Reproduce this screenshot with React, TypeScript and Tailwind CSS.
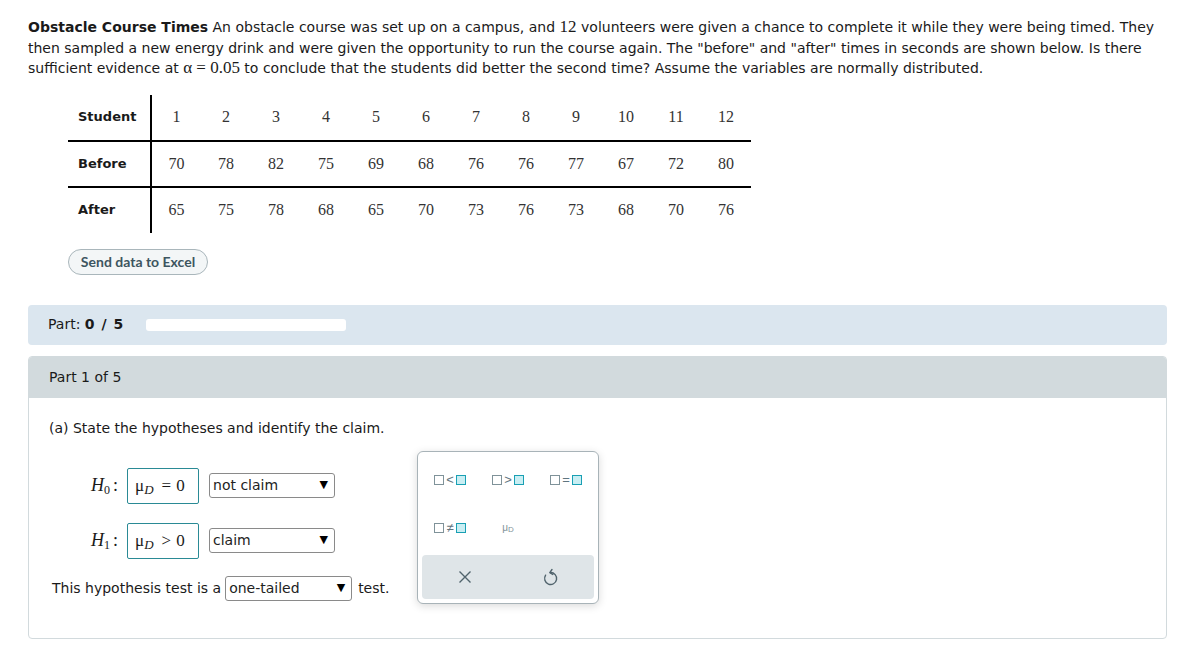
import React from 'react';

// Data for the paired samples
const STUDENTS = [1, 2, 3, 4, 5, 6, 7, 8, 9, 10, 11, 12];
const BEFORE = [70, 78, 82, 75, 69, 68, 76, 76, 77, 67, 72, 80];
const AFTER = [65, 75, 78, 68, 65, 70, 73, 76, 73, 68, 70, 76];

const SANS = "font-['DejaVu_Sans',Verdana,sans-serif]";
const SERIF = "font-['Liberation_Serif','Times_New_Roman',serif]";

const DataRow: React.FC<{ label: string; values: number[]; last?: boolean }> = ({ label, values, last }) => (
  <tr className={last ? 'h-[46px]' : 'h-[46px] border-b-2 border-black'}>
    <td className="w-[83px] pl-[10px] border-r-2 border-black text-[13px] font-bold">{label}</td>
    {values.map((v, i) => (
      <td key={i} className={`w-[50px] text-center text-[16px] text-[#333] ${SERIF}`}>
        {v}
      </td>
    ))}
  </tr>
);

const FakeSelect: React.FC<{ value: string; width: string }> = ({ value, width }) => (
  <div
    className={`${width} h-[25px] flex items-center justify-between pl-[3px] pr-[6px] border border-[#8a8a8a] rounded-[3px] bg-white text-[14px] text-[#222]`}
  >
    <span>{value}</span>
    <span className="text-[11px] text-black">▼</span>
  </div>
);

const MuD = () => (
  <span className={`${SERIF} text-[17px]`}>
    μ<sub className="italic text-[13px] relative top-[3px]">D</sub>
  </span>
);

const Hypothesis: React.FC<{ idx: string; op: string; tag: string }> = ({ idx, op, tag }) => (
  <div className="flex items-center h-[36px] pl-[42px]">
    <span className={`${SERIF} text-[18px] italic`}>H</span>
    <sub className={`${SERIF} text-[12px] relative top-[4px]`}>{idx}</sub>
    <span className={`${SERIF} text-[18px] ml-[3px]`}>:</span>
    <div className="ml-[9px] w-[72px] h-[36px] flex items-center pl-[7px] border border-[#2a8a95] rounded-[2px]">
      <MuD />
      <span className={`${SERIF} text-[17px] ml-[8px]`}>{op}</span>
      <span className={`${SERIF} text-[17px] ml-[5px]`}>0</span>
    </div>
    <div className="ml-[10px]">
      <FakeSelect value={tag} width="w-[126px]" />
    </div>
  </div>
);

// Small template glyph: empty box, operator, filled box
const Template: React.FC<{ op: string }> = ({ op }) => (
  <div className="flex items-center gap-[2px]">
    <span className="w-[10px] h-[10px] border-[1.5px] border-[#7f9299] bg-white" />
    <span className="text-[13px] leading-none text-[#5f7580] font-['Liberation_Sans',Arial,sans-serif]">{op}</span>
    <span className="w-[10px] h-[10px] border-[1.5px] border-[#19a0b4] bg-[#c9eef3]" />
  </div>
);

const Palette = () => (
  <div className="w-[182px] h-[153px] flex flex-col border border-[#a8b3b8] rounded-[6px] bg-white shadow-[0_2px_8px_rgba(0,0,0,0.15)]">
    <div className="grid grid-cols-3 px-[3px] pt-[21px]">
      <div className="flex justify-center h-[14px]"><Template op="<" /></div>
      <div className="flex justify-center h-[14px]"><Template op=">" /></div>
      <div className="flex justify-center h-[14px]"><Template op="=" /></div>
    </div>
    <div className="grid grid-cols-3 px-[3px] mt-[34px]">
      <div className="flex justify-center h-[14px]"><Template op="≠" /></div>
      <div className="flex justify-center items-center h-[14px] text-[10px] text-[#7f9299] font-['Liberation_Sans',Arial,sans-serif]">
        μ<span className="text-[8px] relative top-[2px]">D</span>
      </div>
      <div />
    </div>
    <div className="mt-auto mx-[4px] mb-[4px] h-[44px] flex bg-[#dfe5e8] rounded-[4px]">
      <div className="flex-1 flex items-center justify-center">
        <svg width="14" height="14" viewBox="0 0 14 14" fill="none" stroke="#50636c" strokeWidth="1.4">
          <path d="M1.5 1.5 L12.5 12.5 M12.5 1.5 L1.5 12.5" />
        </svg>
      </div>
      <div className="flex-1 flex items-center justify-center">
        <svg width="16" height="18" viewBox="0 0 16 18" fill="none" stroke="#50636c" strokeWidth="1.4" strokeLinecap="round" strokeLinejoin="round">
          <path d="M7.5 4.5 A6 6 0 1 1 2.6 7.2" />
          <path d="M9 1.5 L6.8 4.6 L9.8 6.5" />
        </svg>
      </div>
    </div>
  </div>
);

export default function App() {
  return (
    <div className={`min-h-screen bg-white text-[#1a1a1a] ${SANS} pl-[28px] pr-[15px] pt-[17px]`}>
      <p className="text-[14px] leading-[20.5px] pr-[6px]">
        <b>Obstacle Course Times</b> An obstacle course was set up on a campus, and{' '}
        <span className={`${SERIF} text-[17px]`}>12</span> volunteers were given a chance to complete it while they
        were being timed. They then sampled a new energy drink and were given the opportunity to run the course
        again. The "before" and "after" times in seconds are shown below. Is there sufficient evidence at{' '}
        <span className={`${SERIF} text-[17px]`}>α = 0.05</span> to conclude that the students did better the
        second time? Assume the variables are normally distributed.
      </p>

      <table className="ml-[40px] mt-[16px] border-collapse">
        <tbody>
          <tr className="h-[46px] border-b-2 border-black">
            <td className="w-[83px] pl-[10px] border-r-2 border-black text-[13px] font-bold">Student</td>
            {STUDENTS.map((s) => (
              <td key={s} className={`w-[50px] text-center text-[16px] text-[#333] ${SERIF}`}>
                {s}
              </td>
            ))}
          </tr>
          <DataRow label="Before" values={BEFORE} />
          <DataRow label="After" values={AFTER} last />
        </tbody>
      </table>

      <button
        type="button"
        className="ml-[40px] mt-[16px] w-[140px] h-[26px] rounded-full border border-[#a9b6bb] bg-[#f3f6f7] text-[14px] font-bold text-[#3d5560] font-['Lato',sans-serif]"
      >
        Send data to Excel
      </button>

      {/* Progress */}
      <div className="mt-[30px] h-[40px] flex items-center pl-[20px] bg-[#dbe6ef] rounded-[4px] text-[14px]">
        <span>
          Part: <b className="tracking-[1px]">0 / 5</b>
        </span>
        <div className="ml-[22px] w-[200px] h-[12px] bg-white rounded-[3px]" />
      </div>

      {/* Part card */}
      <div className="mt-[11px] h-[283px] flex flex-col border border-[#d2dadd] rounded-[4px] overflow-hidden">
        <div className="h-[41px] flex items-center pl-[20px] bg-[#d2dadd] text-[14px]">Part 1 of 5</div>
        <div className="px-[20px] pt-[19px]">
          <div className="text-[14px] leading-[22px]">(a) State the hypotheses and identify the claim.</div>
          <div className="flex items-start mt-[12px]">
            <div className="flex flex-col pt-[17px] w-[368px]">
              <Hypothesis idx="0" op="=" tag="not claim" />
              <div className="mt-[19px]">
                <Hypothesis idx="1" op=">" tag="claim" />
              </div>
              <div className="mt-[17px] flex items-center pl-[3px] text-[14px]">
                <span>This hypothesis test is a</span>
                <div className="ml-[4px]">
                  <FakeSelect value="one-tailed" width="w-[127px]" />
                </div>
                <span className="ml-[6px]">test.</span>
              </div>
            </div>
            <Palette />
          </div>
        </div>
      </div>
    </div>
  );
}
